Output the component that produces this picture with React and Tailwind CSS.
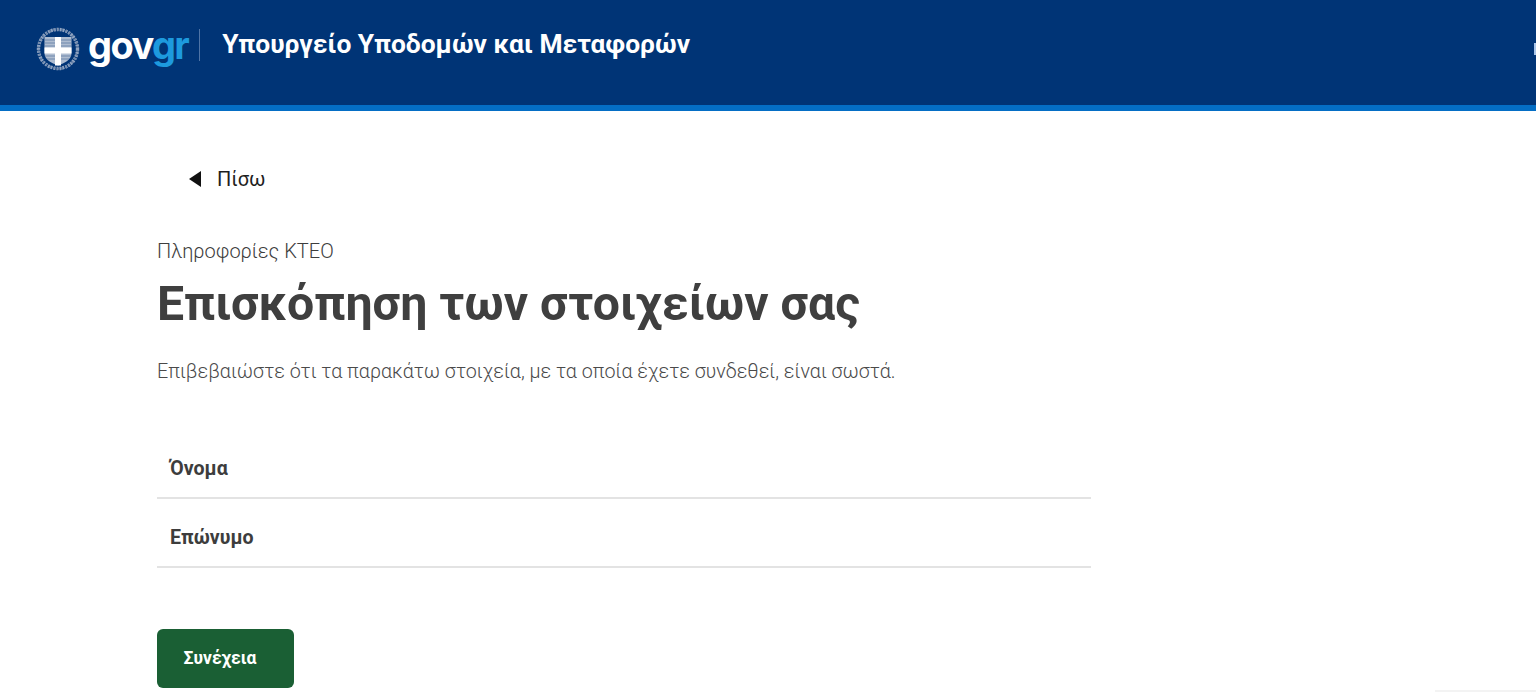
import React from "react";

function Emblem() {
	const dots = Array.from({ length: 30 }, (_, i) => (i * 360) / 30);
	return (
		<svg width="44" height="44" viewBox="0 0 44 44" className="mt-[8px] shrink-0">
			<circle cx="22" cy="22" r="19.5" fill="none" stroke="#8fa3c0" strokeWidth="3.4" strokeDasharray="2 1" />
			{dots.map((deg) => (
				<ellipse key={deg} cx="22" cy="2.4" rx="0.8" ry="1.5" fill="#6f88ab" transform={`rotate(${deg} 22 22)`} />
			))}
			<path d="M8.5 10h27v16c0 7-7 10-13.500 12.500C15.500 36 8.500 33 8.500 26z" fill="#aebcd0" />
			<path d="M9 13h26M9 16h26M9 19h26M9 29h26M11 32h22" stroke="#6f88ab" strokeWidth="1.200" />
			<path d="M19 10h6v10.500h10.500v6H25v12h-6v-12H8.500v-6H19z" fill="#ffffff" />
		</svg>
	);
}

function InfoRow({ label }) {
	return (
		<div className="flex h-[69px] items-center border-b-2 border-[#e3e3e3] pl-[13px] pt-[11px] text-[19.6px] font-bold text-[#3d3d3d]">
			{label}
		</div>
	);
}

export default function App() {
	return (
		<div className="relative min-h-[692px] overflow-hidden bg-white font-['Roboto',sans-serif]">
			<header className="flex h-[111px] items-center border-b-[6px] border-[#046ec5] bg-[#003476] pl-[36px] pb-[15px]">
				<Emblem />
				<div className="ml-[8px] font-['Inter',sans-serif] text-[38px] leading-none font-bold tracking-[-1.6px] text-white">
					gov<span className="text-[#1d9ade]">gr</span>
				</div>
				<div className="ml-[11px] h-[32px] w-px bg-[#4f74a6]" />
				<div className="ml-[22px] text-[26.4px] font-bold text-white">Υπουργείο Υποδομών και Μεταφορών</div>
				<div className="mt-[8px] ml-auto h-[12px] w-[2px] bg-[#a8c4e8]" />
			</header>

			<main className="pl-[157px]">
				<div className="flex items-center pt-[56px] pl-[32px] text-[20px] leading-[24px] text-[#1f1f1f]">
					<svg width="12" height="16" viewBox="0 0 12 16">
						<path d="M12 0v16L0 8z" fill="#111111" />
					</svg>
					<span className="ml-[16px]">Πίσω</span>
				</div>

				<div className="mt-[48px] text-[20px] leading-[24px] font-light text-[#3d3d3d]">Πληροφορίες ΚΤΕΟ</div>
				<h1 className="mt-[12px] text-[48.200px] leading-[58px] font-bold text-[#3f3f3f]">Επισκόπηση των στοιχείων σας</h1>
				<p className="mt-[26px] text-[19.700px] leading-[26px] font-light text-[#4a4a4a]">
					Επιβεβαιώστε ότι τα παρακάτω στοιχεία, με τα οποία έχετε συνδεθεί, είναι σωστά.
				</p>

				<div className="mt-[45px] w-[934px]">
					<InfoRow label="Όνομα" />
					<InfoRow label="Επώνυμο" />
				</div>

				<button className="mt-[61px] h-[59px] w-[137px] rounded-[6px] bg-[#1a5f34] pr-[11px] text-[17.500px] font-bold text-white">
					Συνέχεια
				</button>
			</main>

			<div className="absolute right-0 bottom-0 h-[2px] w-[101px] bg-[#f3f3f3]" />
		</div>
	);
}
